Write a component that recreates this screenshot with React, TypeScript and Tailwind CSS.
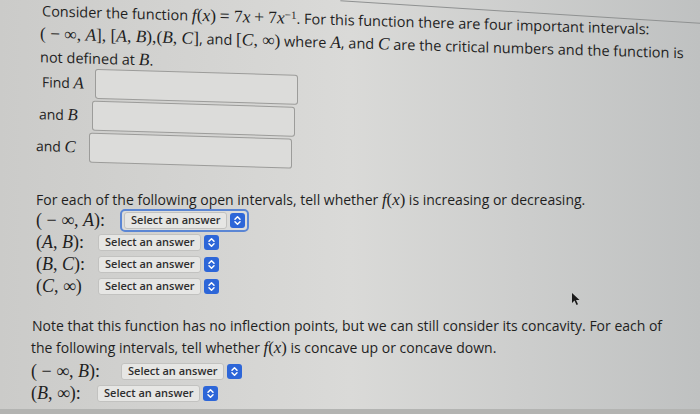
import React from "react";

const serif = { fontFamily: '"Liberation Serif", "DejaVu Serif", serif' };

function M({ children }: { children: React.ReactNode }) {
  return (
    <span className="italic text-[1.2em]" style={serif}>
      {children}
    </span>
  );
}

function U({ children }: { children: React.ReactNode }) {
  return (
    <span className="text-[1.2em]" style={serif}>
      {children}
    </span>
  );
}

function Fx() {
  return (
    <>
      <M>f</M>
      <U>(</U>
      <M>x</M>
      <U>)</U>
    </>
  );
}

function Chevrons() {
  return (
    <svg width="9" height="11" viewBox="0 0 9 11" fill="none">
      <path d="M2 4.2 L4.5 1.8 L7 4.2" stroke="white" strokeWidth="1.5" strokeLinecap="round" strokeLinejoin="round" />
      <path d="M2 6.8 L4.5 9.2 L7 6.8" stroke="white" strokeWidth="1.5" strokeLinecap="round" strokeLinejoin="round" />
    </svg>
  );
}

function Select({ focused = false }: { focused?: boolean }) {
  const inner = (
    <div className="flex items-center">
      <div className="h-[17px] flex items-center pl-[6px] pr-[6px] bg-[#e6e6e4] border border-[#c2c2c0] rounded-[3px] text-[11px] font-semibold text-[#2e2e2e] whitespace-nowrap">
        Select an answer
      </div>
      <div className="ml-[3px] w-[15px] h-[15px] rounded-[3px] bg-[#2d66d8] flex items-center justify-center">
        <Chevrons />
      </div>
    </div>
  );
  if (focused) {
    return (
      <div className="border-2 border-[#5b86d4] rounded-[5px] pl-[2px] pr-[2px] py-[1px] bg-[#dcdcda]">
        {inner}
      </div>
    );
  }
  return inner;
}

function Row({ label, focused, w }: { label: React.ReactNode; focused?: boolean; w: string }) {
  return (
    <div className="h-[22px] flex items-center">
      <span className={`whitespace-nowrap ${w}`}>{label}</span>
      <Select focused={focused} />
    </div>
  );
}

function InputRow({ label, pad }: { label: React.ReactNode; pad: string }) {
  return (
    <div className={`h-[32px] flex items-center ${pad}`}>
      <span className="w-[53px] whitespace-nowrap">{label}</span>
      <div className="w-[203px] h-[30px] bg-[#dcdcda] border border-[#9c9c9a] rounded-[3px]" />
    </div>
  );
}

export default function App() {
  return (
    <div
      className="relative w-[700px] h-[414px] overflow-hidden flex flex-col bg-gradient-to-r from-[#cbcbc9] via-[#dadad8] to-[#bfc1c1] text-[#1f1f1f] text-[14px]"
      style={{ fontFamily: '"Open Sans", "Noto Sans", sans-serif' }}
    >
      <div className="absolute top-[12px] left-[340px] w-[375px] h-px bg-[#8f9191] rotate-[3.6deg]" />

      {/* the photo's top part leans down to the right */}
      <div className="origin-[0_0] skew-y-[1.7deg] -mt-[2px]">
        <div className="pl-[42px] leading-[22px] whitespace-nowrap text-[14.5px]">
          <div>
            Consider the function <Fx /> <U>= 7</U>
            <M>x</M> <U>+ 7</U>
            <M>x</M>
            <sup className="text-[11px]" style={serif}>−1</sup>. For this function there are four important intervals:
          </div>
          <div className="-ml-[2px]">
            <U>( − ∞, </U>
            <M>A</M>
            <U>], [</U>
            <M>A</M>
            <U>, </U>
            <M>B</M>
            <U>),(</U>
            <M>B</M>
            <U>, </U>
            <M>C</M>
            <U>]</U>, and <U>[</U>
            <M>C</M>
            <U>, ∞)</U> where <M>A</M>, and <M>C</M> are the critical numbers and the function is
          </div>
          <div className="-ml-[2px]">
            not defined at <M>B</M>.
          </div>
        </div>

        <div className="mt-[-2px]">
          <InputRow pad="pl-[42px]" label={<>Find <M>A</M></>} />
          <InputRow pad="pl-[39px]" label={<>and <M>B</M></>} />
          <InputRow pad="pl-[36px]" label={<>and <M>C</M></>} />
        </div>
      </div>

      <div className="mt-[28px] pl-[36px] leading-[22px] whitespace-nowrap">
        For each of the following open intervals, tell whether <Fx /> is increasing or decreasing.
      </div>
      <div className="pl-[36px] text-[15px] -mt-[2px]">
        <Row
          w="w-[84px]"
          focused
          label={
            <>
              <U>( − ∞, </U>
              <M>A</M>
              <U>):</U>
            </>
          }
        />
        <Row
          w="w-[62px]"
          label={
            <>
              <U>(</U>
              <M>A</M>
              <U>, </U>
              <M>B</M>
              <U>):</U>
            </>
          }
        />
        <Row
          w="w-[62px]"
          label={
            <>
              <U>(</U>
              <M>B</M>
              <U>, </U>
              <M>C</M>
              <U>):</U>
            </>
          }
        />
        <Row
          w="w-[62px]"
          label={
            <>
              <U>(</U>
              <M>C</M>
              <U>, ∞)</U>
            </>
          }
        />
      </div>

      <div className="mt-[18px] pl-[32px] leading-[22px] whitespace-nowrap">
        <div>
          Note that this function has no inflection points, but we can still consider its concavity. For each of
        </div>
        <div className="-ml-[1px]">
          the following intervals, tell whether <Fx /> is concave up or concave down.
        </div>
      </div>
      <div className="pl-[31px] text-[15px] mt-[1px]">
        <Row
          w="w-[90px]"
          label={
            <>
              <U>( − ∞, </U>
              <M>B</M>
              <U>):</U>
            </>
          }
        />
        <Row
          w="w-[66px]"
          label={
            <>
              <U>(</U>
              <M>B</M>
              <U>, ∞):</U>
            </>
          }
        />
      </div>

      <div className="mt-auto h-[5px] bg-[#b3b4b2]" />

      <svg className="absolute left-[571px] top-[292px]" width="10" height="14" viewBox="0 0 10 14">
        <path d="M1 1 L1 11 L3.5 8.6 L5.5 13 L7 12.3 L5 8 L8.5 8 Z" fill="#1a1a1a" />
      </svg>
    </div>
  );
}
